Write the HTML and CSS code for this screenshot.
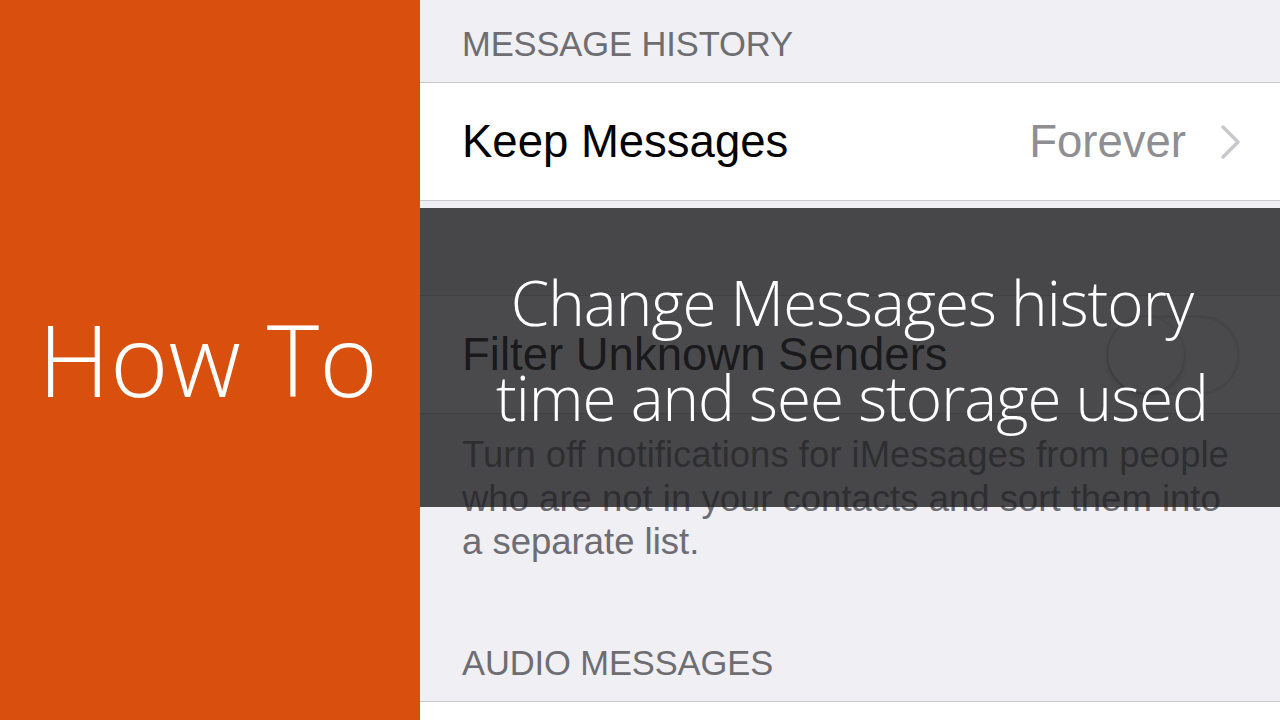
FILE: index.html
```html
<!DOCTYPE html>
<html lang="en">
<head>
<meta charset="utf-8">
<title>How To - Change Messages history</title>
<link rel="stylesheet" href="styles.css">
</head>
<body>
<div class="page">
  <aside class="brand">
    <div class="brand-title">How To</div>
  </aside>
  <main class="settings">
    <div class="group-header">MESSAGE HISTORY</div>
    <div class="group">
      <div class="cell">
        <span class="cell-label">Keep Messages</span>
        <span class="cell-value">Forever</span>
        <svg class="chevron" width="22" height="36" viewBox="0 0 22 36"><path d="M3 3 L18 18 L3 33" fill="none" stroke="#c7c7cc" stroke-width="3.5" stroke-linecap="round" stroke-linejoin="round"/></svg>
      </div>
    </div>
    <div class="spacer"></div>
    <div class="group">
      <div class="cell">
        <span class="cell-label">Filter Unknown Senders</span>
        <span class="switch"><span class="knob"></span></span>
      </div>
    </div>
    <div class="group-footer">Turn off notifications for iMessages from people who are not in your contacts and sort them into a separate list.</div>
    <div class="group-header header-lower">AUDIO MESSAGES</div>
    <div class="group group-last"></div>
    <div class="overlay">
      <div class="overlay-text">Change Messages history<br>time and see storage used</div>
    </div>
  </main>
</div>
</body>
</html>
```
FILE: styles.css
```css
html, body {
  margin: 0;
  padding: 0;
  width: 1280px;
  height: 720px;
  overflow: hidden;
}
.page {
  display: flex;
  width: 1280px;
  height: 720px;
}
.brand {
  width: 420px;
  flex: none;
  background: #d9500e;
  display: flex;
  align-items: center;
  justify-content: center;
}
.brand-title {
  font-family: "Open Sans", sans-serif;
  font-weight: 300;
  font-size: 100px;
  color: #ffffff;
  line-height: 1;
  white-space: nowrap;
  margin-top: -4px;
  margin-left: -4px;
}
.settings {
  flex: 1;
  position: relative;
  background: #efeff4;
  font-family: "Liberation Sans", Arial, sans-serif;
  overflow: hidden;
}
.group-header {
  height: 83px;
  box-sizing: border-box;
  padding: 6px 0 0 42px;
  display: flex;
  align-items: center;
  font-size: 34.5px;
  color: #6d6d72;
  letter-spacing: -0.1px;
  border-bottom: 1px solid #c8c7cc;
}
.group {
  background: #ffffff;
  border-bottom: 1px solid #c8c7cc;
}
.cell {
  height: 117px;
  display: flex;
  align-items: center;
  padding: 0 38px 0 42px;
  font-size: 45.5px;
}
.cell-label {
  flex: 1;
  color: #000000;
}
.cell-value {
  color: #8e8e93;
  margin-right: 34px;
}
.chevron {
  display: block;
}
.spacer {
  height: 94px;
  border-bottom: 1px solid #c8c7cc;
}
.switch {
  position: relative;
  width: 134px;
  height: 80px;
  box-sizing: border-box;
  border: 3px solid #e5e5ea;
  border-radius: 40px;
  background: #ffffff;
  margin-right: 2px;
}
.knob {
  position: absolute;
  left: -1px;
  top: -1px;
  width: 76px;
  height: 76px;
  border-radius: 50%;
  background: #ffffff;
  box-shadow: 0 3px 6px rgba(0, 0, 0, 0.25), 0 0 0 1px rgba(0, 0, 0, 0.08);
}
.group-footer {
  padding: 19px 30px 0 42px;
  font-size: 36.5px;
  line-height: 43.5px;
  color: #6d6d72;
}
.header-lower {
  height: auto;
  padding-top: 80px;
  padding-bottom: 18px;
}
.group-last {
  height: 40px;
  border-bottom: none;
}
.overlay {
  position: absolute;
  left: 0;
  right: 0;
  top: 208px;
  height: 299px;
  background: rgba(32, 32, 34, 0.81);
  display: flex;
  align-items: center;
  justify-content: center;
}
.overlay-text {
  font-family: "Open Sans", sans-serif;
  font-weight: 300;
  font-size: 62px;
  letter-spacing: -1px;
  line-height: 95px;
  color: #ffffff;
  text-align: center;
  white-space: nowrap;
  margin-top: -15px;
  margin-left: 4px;
}
```
